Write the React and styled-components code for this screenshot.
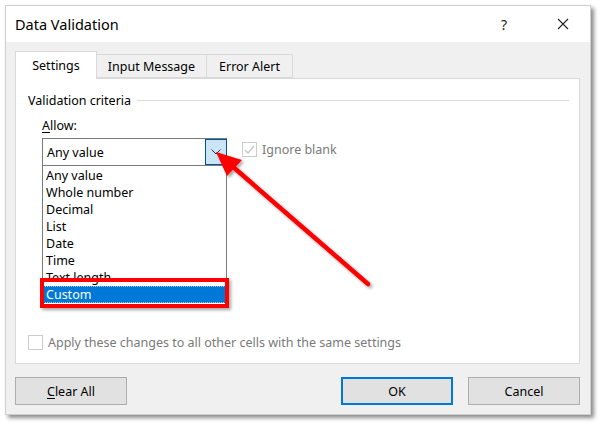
import React from 'react';
import styled, { createGlobalStyle } from 'styled-components';

const GlobalStyle = createGlobalStyle`
  html, body {
    margin: 0;
    padding: 0;
    background: #ffffff;
  }
  body {
    font-family: "Noto Sans", "Open Sans", sans-serif;
    color: #000;
  }
`;

const Page = styled.div`
  position: relative;
  width: 600px;
  height: 425px;
  padding: 5px 0 0 5px;
  box-sizing: border-box;
`;

const Window = styled.div`
  width: 586px;
  height: 410px;
  display: flex;
  flex-direction: column;
  background: #f0f0f0;
  border: 1px solid #cfcfcf;
  box-sizing: border-box;
  box-shadow: 3px 3px 4px rgba(0, 0, 0, 0.45);
`;

const TitleBar = styled.div`
  height: 36px;
  background: #ffffff;
  display: flex;
  align-items: center;
  padding: 0 4px 0 9px;
  font-size: 14.5px;
`;

const TitleText = styled.div`
  flex: 1;
`;

const TitleButton = styled.div`
  width: 46px;
  height: 36px;
  margin-left: ${p => p.gap || 0}px;
  display: flex;
  align-items: center;
  justify-content: center;
  font-size: 14px;
  color: #222;
`;

const Body = styled.div`
  flex: 1;
  display: flex;
  flex-direction: column;
  padding: 9px 10px 0 9px;
`;

const TabRow = styled.div`
  display: flex;
  align-items: flex-end;
  height: 27px;
  position: relative;
  z-index: 1;
`;

const Tab = styled.div`
  height: ${p => (p.active ? '28px' : '24px')};
  margin-bottom: ${p => (p.active ? '-1px' : '0')};
  width: ${p => p.w}px;
  box-sizing: border-box;
  display: flex;
  align-items: center;
  justify-content: center;
  font-size: 12.5px;
  background: ${p => (p.active ? '#ffffff' : '#f0f0f0')};
  border: 1px solid #d9d9d9;
  border-bottom: ${p => (p.active ? 'none' : '1px solid #d9d9d9')};
  margin-left: ${p => (p.first ? '0' : '-1px')};
  padding-top: ${p => (p.active ? '0' : '1px')};
`;

const Panel = styled.div`
  width: 565px;
  height: 286px;
  box-sizing: border-box;
  background: #ffffff;
  border: 1px solid #d9d9d9;
  padding: 11px 10px 0 12px;
  position: relative;
`;

const GroupHead = styled.div`
  display: flex;
  align-items: center;
  gap: 6px;
  font-size: 12.5px;
  height: 20px;
`;

const GroupLine = styled.div`
  flex: 1;
  height: 1px;
  background: #dcdcdc;
`;

const Indent = styled.div`
  padding-left: 14px;
`;

const Label = styled.div`
  font-size: 12.5px;
  margin-top: 6px;
  height: 20px;
  line-height: 20px;
`;

const U = styled.span`
  text-decoration: underline;
  text-underline-offset: 2px;
`;

const ComboRow = styled.div`
  display: flex;
  align-items: flex-start;
  gap: 15px;
  margin-top: 2px;
`;

const ComboColumn = styled.div`
  width: 185px;
  position: relative;
`;

const Combo = styled.div`
  height: 28px;
  box-sizing: border-box;
  border: 1px solid #7a7a7a;
  display: flex;
  align-items: center;
  font-size: 12.5px;
  padding-left: 4px;
`;

const ComboText = styled.div`
  flex: 1;
`;

const DropButton = styled.div`
  width: 22px;
  height: 26px;
  box-sizing: border-box;
  background: #cce4f7;
  border: 1px solid #005499;
  margin-right: -1px;
  display: flex;
  align-items: center;
  justify-content: center;
`;

const ListBox = styled.div`
  height: 140px;
  box-sizing: border-box;
  border: 1px solid #7a7a7a;
  border-top: none;
  padding-top: 1px;
  overflow: hidden;
  position: relative;
`;

const ListItem = styled.div`
  height: 17px;
  line-height: 17px;
  font-size: 12.5px;
  padding-left: 3px;
  white-space: nowrap;
  background: ${p => (p.selected ? '#0078d7' : 'transparent')};
  color: ${p => (p.selected ? '#ffffff' : '#000000')};
  outline: ${p => (p.selected ? '1px dotted #9cc8ee' : 'none')};
  outline-offset: -1px;
`;

const RedBox = styled.div`
  position: absolute;
  left: -2px;
  top: 140px;
  width: 189px;
  height: 30px;
  box-sizing: border-box;
  border: 4px solid #ff0000;
  box-shadow: 2px 2px 3px rgba(0, 0, 0, 0.35);
`;

const CheckRow = styled.label`
  display: flex;
  align-items: center;
  gap: 5px;
  font-size: 12.5px;
  color: ${p => (p.disabled ? '#7a7a7a' : '#000')};
  height: 18px;
  margin-top: ${p => p.top || 0}px;
`;

const CheckBox = styled.span`
  width: 15px;
  height: 15px;
  box-sizing: border-box;
  border: 1px solid #cccccc;
  background: #ffffff;
  display: flex;
  align-items: center;
  justify-content: center;
`;

const ApplyRow = styled.div`
  position: absolute;
  left: 12px;
  top: 254px;
`;

const ButtonRow = styled.div`
  display: flex;
  align-items: center;
  margin-top: 13px;
`;

const Spacer = styled.div`
  flex: 1;
`;

const Button = styled.div`
  width: 112px;
  height: 28px;
  box-sizing: border-box;
  background: #e1e1e1;
  border: ${p => (p.primary ? '2px solid #0078d7' : '1px solid #adadad')};
  display: flex;
  align-items: center;
  justify-content: center;
  font-size: 12.5px;
  margin-left: ${p => p.gap || 0}px;
`;

const Overlay = styled.svg`
  position: absolute;
  left: 0;
  top: 0;
  pointer-events: none;
`;

const items = ['Any value', 'Whole number', 'Decimal', 'List', 'Date', 'Time', 'Text length', 'Custom'];

export default function App() {
  return (
    <>
      <GlobalStyle />
      <Page>
        <Window>
          <TitleBar>
            <TitleText>Data Validation</TitleText>
            <TitleButton>?</TitleButton>
            <TitleButton gap={13}>
              <svg width="12" height="12" viewBox="0 0 12 12">
                <path d="M1 1 L11 11 M11 1 L1 11" stroke="#222" strokeWidth="1.1" />
              </svg>
            </TitleButton>
          </TitleBar>
          <Body>
            <TabRow>
              <Tab active first w={82}>Settings</Tab>
              <Tab w={111}>Input Message</Tab>
              <Tab w={87}>Error Alert</Tab>
            </TabRow>
            <Panel>
              <GroupHead>
                <span>Validation criteria</span>
                <GroupLine />
              </GroupHead>
              <Indent>
                <Label><U>A</U>llow:</Label>
                <ComboRow>
                  <ComboColumn>
                    <Combo>
                      <ComboText>Any value</ComboText>
                      <DropButton>
                        <svg width="10" height="6" viewBox="0 0 10 6">
                          <path d="M0.5 0.5 L5 5 L9.5 0.5" fill="none" stroke="#333" strokeWidth="1" />
                        </svg>
                      </DropButton>
                    </Combo>
                    <ListBox>
                      {items.map(it => (
                        <ListItem key={it} selected={it === 'Custom'}>{it}</ListItem>
                      ))}
                    </ListBox>
                    <RedBox />
                  </ComboColumn>
                  <CheckRow disabled top={2}>
                    <CheckBox>
                      <svg width="13" height="13" viewBox="0 0 13 13">
                        <path d="M2 7 L5 10 L11 3" fill="none" stroke="#c4c4c4" strokeWidth="1.3" />
                      </svg>
                    </CheckBox>
                    Ignore blank
                  </CheckRow>
                </ComboRow>
              </Indent>
              <ApplyRow>
                <CheckRow disabled>
                  <CheckBox />
                  Apply these changes to all other cells with the same settings
                </CheckRow>
              </ApplyRow>
            </Panel>
            <ButtonRow>
              <Button><U>C</U>lear All</Button>
              <Spacer />
              <Button primary>OK</Button>
              <Button gap={15}>Cancel</Button>
            </ButtonRow>
          </Body>
        </Window>
        <Overlay width="600" height="425" viewBox="0 0 600 425">
          <defs>
            <filter id="sh" x="-20%" y="-20%" width="140%" height="140%">
              <feDropShadow dx="2" dy="2" stdDeviation="1.5" floodColor="#000" floodOpacity="0.35" />
            </filter>
          </defs>
          <g filter="url(#sh)">
            <line x1="368" y1="284" x2="232" y2="166" stroke="#ff0000" strokeWidth="4.5" strokeLinecap="round" />
            <polygon points="216,152 242,160 227,176" fill="#ff0000" />
          </g>
        </Overlay>
      </Page>
    </>
  );
}
